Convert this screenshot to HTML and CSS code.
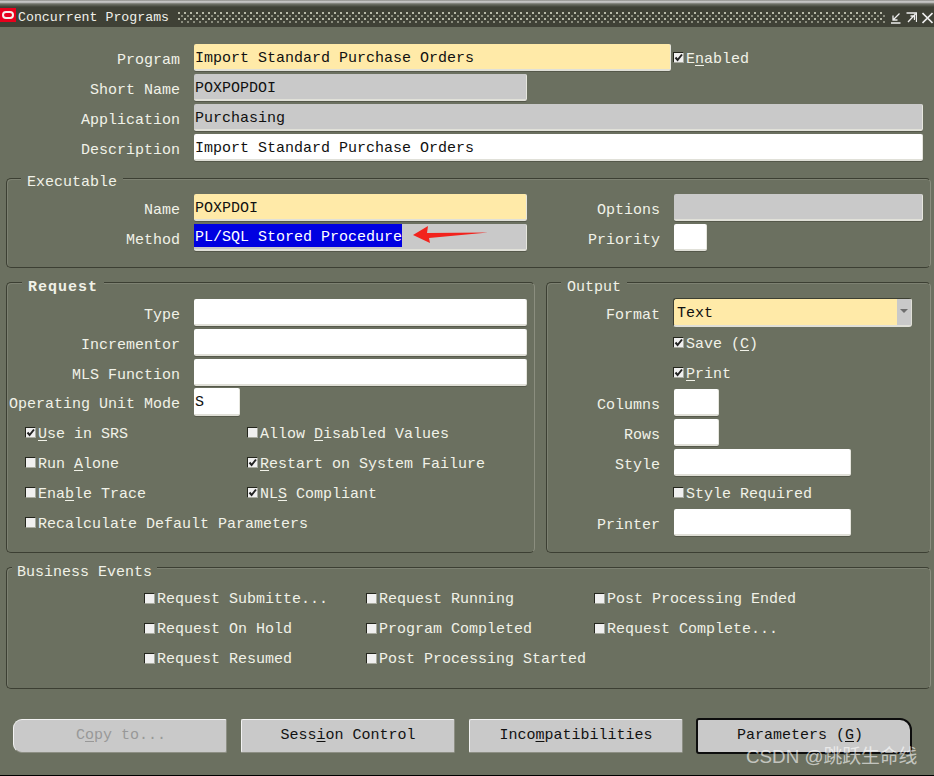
FILE: index.html
```html
<!DOCTYPE html>
<html lang="en">
<head>
<meta charset="utf-8">
<title>Concurrent Programs</title>
<link rel="stylesheet" href="styles.css">
</head>
<body>
<svg class="defs" width="0" height="0" aria-hidden="true"><symbol id="tick" viewBox="0 0 11 11"><path d="M2.5 5.5 L4.6 8 L9 2.5" fill="none" stroke="#222" stroke-width="2"/></symbol></svg>
<div class="window">
  <div class="topstrip"></div>
  <header class="titlebar">
    <span class="logo"><span class="logo-o"></span></span>
    <span class="title">Concurrent Programs</span>
    <span class="dots"></span>
    <svg class="winicon icon-min" viewBox="0 0 10 12"><path d="M8.5 1.5 L2.5 7.5 M2 3.5 V8 H6.5 M0 11 H9.5" fill="none" stroke="#eee" stroke-width="1.3"/></svg>
    <svg class="winicon icon-max" viewBox="0 0 11 12"><path d="M0.5 1 H10.5 V10 M9.5 2 L2 10 M4.5 4 H8.5 V8" fill="none" stroke="#eee" stroke-width="1.3"/></svg>
    <svg class="winicon icon-close" viewBox="0 0 11 12"><path d="M0.5 1 L10.5 11 M10.5 1 L0.5 11" fill="none" stroke="#eee" stroke-width="1.6"/></svg>
  </header>

  <main class="content">
    <section class="topform">
      <div class="row">
        <label class="lab lab-top">Program</label>
        <div class="field yellow w-program">Import Standard Purchase Orders</div>
        <div class="check enabled"><span class="box"><svg><use href="#tick"/></svg></span><span>E<u>n</u>abled</span></div>
      </div>
      <div class="row"><label class="lab lab-top">Short Name</label><div class="field grey w-short">POXPOPDOI</div></div>
      <div class="row"><label class="lab lab-top">Application</label><div class="field grey w-wide">Purchasing</div></div>
      <div class="row"><label class="lab lab-top">Description</label><div class="field white w-wide">Import Standard Purchase Orders</div></div>
    </section>

    <section class="group executable">
      <span class="legend leg-exec">Executable</span>
      <div class="row">
        <label class="lab lab-left">Name</label>
        <div class="field yellow w-short">POXPDOI</div>
        <label class="lab lab-exec2">Options</label>
        <div class="field grey w-options"></div>
      </div>
      <div class="row">
        <label class="lab lab-left">Method</label>
        <div class="field grey w-short method"><span class="selected">PL/SQL Stored Procedure</span>
          <svg class="arrow" viewBox="0 0 77 18"><path d="M0 9 L15 0 L14 7 L75 6.5 L16 12 L17 17 Z" fill="#f2231d"/></svg>
        </div>
        <label class="lab lab-exec2">Priority</label>
        <div class="field white w-priority"></div>
      </div>
    </section>

    <div class="panels">
      <section class="group request">
        <span class="legend leg-req">Request</span>
        <div class="row"><label class="lab lab-left">Type</label><div class="field white w-short"></div></div>
        <div class="row"><label class="lab lab-left">Incrementor</label><div class="field white w-short"></div></div>
        <div class="row rowtight"><label class="lab lab-left">MLS Function</label><div class="field white w-short"></div></div>
        <div class="row"><label class="lab lab-left">Operating Unit Mode</label><div class="field white w-mode">S</div></div>
        <div class="checkgrid">
          <div class="check"><span class="box"><svg><use href="#tick"/></svg></span><span><u>U</u>se in SRS</span></div>
          <div class="check"><span class="box"></span><span>Allow <u>D</u>isabled Values</span></div>
          <div class="check"><span class="box"></span><span>Run <u>A</u>lone</span></div>
          <div class="check"><span class="box"><svg><use href="#tick"/></svg></span><span><u>R</u>estart on System Failure</span></div>
          <div class="check"><span class="box"></span><span>Ena<u>b</u>le Trace</span></div>
          <div class="check"><span class="box"><svg><use href="#tick"/></svg></span><span>NL<u>S</u> Compliant</span></div>
          <div class="check span2"><span class="box"></span><span>Recalculate Default Parameters</span></div>
        </div>
      </section>

      <section class="group output">
        <span class="legend leg-out">Output</span>
        <div class="row"><label class="lab lab-out">Format</label>
          <div class="field yellow select"><span class="seltext">Text</span><span class="selbtn"></span></div></div>
        <div class="check outcheck"><span class="box"><svg><use href="#tick"/></svg></span><span>Save (<u>C</u>)</span></div>
        <div class="check outcheck"><span class="box"><svg><use href="#tick"/></svg></span><span><u>P</u>rint</span></div>
        <div class="row rowdrop"><label class="lab lab-out">Columns</label><div class="field white w-small"></div></div>
        <div class="row"><label class="lab lab-out">Rows</label><div class="field white w-small"></div></div>
        <div class="row"><label class="lab lab-out">Style</label><div class="field white w-style"></div></div>
        <div class="check outcheck outcheck-tight"><span class="box"></span><span>Style Required</span></div>
        <div class="row"><label class="lab lab-out">Printer</label><div class="field white w-style"></div></div>
      </section>
    </div>

    <section class="group business">
      <span class="legend leg-bus">Business Events</span>
      <div class="busgrid">
        <div class="check"><span class="box"></span><span>Request Submitte...</span></div>
        <div class="check"><span class="box"></span><span>Request Running</span></div>
        <div class="check"><span class="box"></span><span>Post Processing Ended</span></div>
        <div class="check"><span class="box"></span><span>Request On Hold</span></div>
        <div class="check"><span class="box"></span><span>Program Completed</span></div>
        <div class="check"><span class="box"></span><span>Request Complete...</span></div>
        <div class="check"><span class="box"></span><span>Request Resumed</span></div>
        <div class="check"><span class="box"></span><span>Post Processing Started</span></div>
      </div>
    </section>

    <div class="buttons">
      <button class="btn btn-first" disabled>C<u>o</u>py to...</button>
      <button class="btn">Sess<u>i</u>on Control</button>
      <button class="btn">Inco<u>m</u>patibilities</button>
      <button class="btn btn-default">Parameters (<u>G</u>)</button>
    </div>
  </main>
  <span class="watermark">CSDN @跳跃生命线</span>
</div>
</body>
</html>
```

FILE: styles.css
```css
* { box-sizing: border-box; }
html, body { margin: 0; padding: 0; }
body { background: #6b7060; }
.defs { position: absolute; }

.window {
  position: relative;
  width: 934px;
  height: 776px;
  overflow: hidden;
  background: #6b7060;
  color: #f1f2e8;
  font: 15px/30px "Liberation Mono", monospace;
  border-bottom: 1px solid #000;
}

.topstrip {
  height: 8px;
  background: linear-gradient(#8a8a86 0, #d8d8d8 2px, #9a9a96 3px, #6f7268 4px, #3f4136 7px);
}
.titlebar {
  display: flex;
  align-items: center;
  height: 19px;
  background: #3f4136;
  color: #f0f0ea;
  line-height: 17px;
}
.logo {
  width: 16px;
  height: 14px;
  margin-top: -6px;
  background: #e8001c;
  display: flex;
  align-items: center;
  justify-content: center;
  flex: none;
}
.logo-o {
  width: 12px;
  height: 8px;
  border: 2px solid #f4f0ea;
  border-radius: 4px;
}
.title { margin-left: 2px; white-space: nowrap; flex: none; font-size: 13.25px; }
.dots {
  flex: 1;
  height: 11px;
  margin: 0 6px 0 9px;
  background-color: #3f4136;
  background-image:
    radial-gradient(circle at 1px 1px, #b8baa9 0.9px, transparent 1.2px),
    radial-gradient(circle at 4px 4px, #8b8d7e 0.9px, transparent 1.2px);
  background-size: 6px 6px;
}
.winicon { height: 12px; flex: none; }
.icon-min { width: 10px; margin-right: 5px; }
.icon-max { width: 11px; margin-right: 5px; }
.icon-close { width: 11px; margin-right: 1px; }

.content { display: block; padding-top: 17px; }

.row { display: flex; align-items: flex-start; height: 30px; }
.lab { text-align: right; flex: none; white-space: nowrap; line-height: 30px; padding-top: 2px; }
.lab-top { width: 180px; margin-right: 14px; }
.lab-left { width: 173px; margin-right: 14px; }
.lab-exec2 { width: 133px; margin-right: 14px; }
.lab-out { width: 113px; margin-right: 14px; }

.field {
  flex: none;
  height: 27px;
  line-height: 29px;
  padding-left: 1px;
  color: #111;
  border-radius: 2px;
  white-space: pre;
  border-right: 1px solid #e6e6de;
  border-bottom: 2px solid #e0e0d8;
  box-shadow: 0 1px 0 #55584a;
}
.yellow { background: #ffeaa8; }
.grey { background: #c9c9c9; }
.white { background: #fff; }

.w-program { width: 477px; }
.w-short { width: 333px; }
.w-wide { width: 729px; }
.w-options { width: 249px; }
.w-priority { width: 33px; }
.w-mode { width: 46px; height: 28px; }
.w-small { width: 45px; }
.w-style { width: 177px; }

.group {
  position: relative;
  margin-left: 6px;
  border: 1px solid #3c3f33;
  border-right-color: #8b8e7f;
  border-bottom-color: #3c3f33;
  border-radius: 5px;
  box-shadow: inset 1px 1px 0 #7d8172;
}
.legend {
  position: absolute;
  background: #6b7060;
  padding: 0 6px;
  line-height: 16px;
  white-space: nowrap;
}
.leg-exec { left: 14px; top: -4px; }
.leg-req { left: 15px; top: -3px; font-weight: bold; letter-spacing: 1px; }
.leg-out { left: 14px; top: -3px; }
.leg-bus { left: 5px; top: -3px; padding: 0 5px; }

.executable { width: 925px; height: 90px; margin-top: 14px; padding-top: 15px; }
.panels { display: flex; gap: 11px; margin-top: 14px; padding-left: 6px; }
.panels .group { margin-left: 0; height: 271px; padding-top: 16px; }
.request { width: 529px; }
.output { width: 385px; }
.rowtight { height: 29px; }

.method { position: relative; padding-left: 0; }
.selected { display: inline-block; height: 23px; line-height: 28px; padding-left: 1px; background: #0000e1; color: #fff; vertical-align: top; }
.arrow { position: absolute; left: 219px; top: 2px; width: 77px; height: 18px; }

.check { display: flex; align-items: center; height: 30px; padding-top: 4px; white-space: nowrap; line-height: 30px; }
.check u, .lab u, .btn u { text-underline-offset: 2px; }
.box {
  flex: none;
  width: 11px;
  height: 11px;
  margin-right: 2px;
  margin-top: -6px;
  background: #f0f0f0;
  border-top: 1px solid #24261d;
  border-left: 1px solid #24261d;
  border-right: 1px solid #a9aba0;
  border-bottom: 1px solid #a9aba0;
  display: block;
}
.box svg { display: block; width: 11px; height: 11px; margin: -1px 0 0 -1px; }
.enabled { margin-left: 2px; height: 28px; }

.checkgrid {
  display: grid;
  grid-template-columns: 222px 1fr;
  padding-left: 18px;
}
.span2 { grid-column: 1 / span 2; }

.select { display: flex; width: 239px; margin-left: -1px; margin-top: -1px; height: 29px; padding-left: 3px; border: 1px solid #3c3f33; border-right-color: #e0e0d8; border-bottom: 2px solid #e0e0d8; box-shadow: none; border-radius: 3px; }
.seltext { flex: 1; }
.selbtn { position: relative; width: 14px; background: #c9c9c9; }
.selbtn::after {
  content: "";
  position: absolute;
  left: 3px;
  top: 10px;
  border: 4px solid transparent;
  border-top: 4px solid #6e6e6e;
  border-bottom: 0;
}
.outcheck { margin-left: 126px; margin-top: -1px; }
.outcheck + .outcheck { margin-top: 0; }
.rowdrop { margin-top: 1px; }
.outcheck-tight { margin-top: -1px; }
.outcheck-tight + .row { margin-top: 1px; }

.business { width: 925px; height: 122px; margin-top: 14px; padding: 16px 0 0 137px; }
.busgrid {
  display: grid;
  grid-template-columns: 222px 228px 1fr;
}
.busgrid .check { padding-top: 2px; }
.busgrid .box { margin-top: -4px; }

.buttons { display: flex; gap: 14px; padding: 30px 0 0 13px; }
.btn {
  width: 214px;
  height: 34px;
  padding: 0;
  font: inherit;
  line-height: 30px;
  color: #111;
  background: #c9c9c9;
  border: 0;
  border-top: 1px solid #f2f2f2;
  border-left: 1px solid #f2f2f2;
  border-right: 1px solid #8d8f84;
  border-bottom: 1px solid #8d8f84;
  border-radius: 2px;
  flex: none;
}
.btn-first { border-radius: 9px 2px 2px 9px; color: #989898; padding-left: 2px; }
.btn-default {
  width: 216px;
  margin-left: -1px;
  height: 36px;
  margin-top: -1px;
  padding-right: 8px;
  border: 2px solid #0d0d0d;
  border-radius: 3px 12px 3px 3px;
  color: #111;
}

.watermark {
  position: absolute;
  left: 746px;
  top: 745px;
  font: 18.8px/24px "Liberation Sans", "Noto Sans CJK SC", sans-serif;
  color: rgba(255,255,255,0.62);
  white-space: nowrap;
}
```
